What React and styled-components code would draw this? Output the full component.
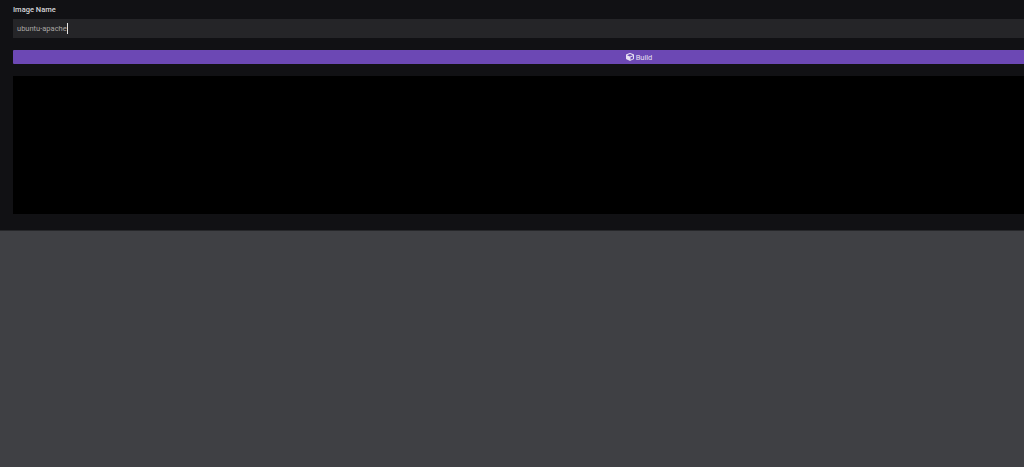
import { useState } from 'react'
import styled, { createGlobalStyle } from 'styled-components'
import { FaCube } from 'react-icons/fa'

const GlobalStyle = createGlobalStyle`
	html, body {
		margin: 0;
		padding: 0;
		height: 100%;
		overflow: hidden;
		background-color: #3f4044;
		font-family: 'Roboto', 'Liberation Sans', sans-serif;
	}
`

const Panel = styled.section`
	width: 1278px;
	height: 231px;
	box-sizing: border-box;
	padding: 5px 13px 0;
	background-color: #111114;
	border-bottom: 1px solid #26272a;
	display: flex;
	flex-direction: column;
`

const Label = styled.label`
	height: 14px;
	line-height: 10px;
	font-size: 7.5px;
	font-weight: 500;
	color: #d6d6d8;
`

const InputWrap = styled.div`
	position: relative;
	height: 19px;
`

const Input = styled.input`
	display: block;
	box-sizing: border-box;
	width: 100%;
	height: 100%;
	padding: 0 4px;
	background-color: #252528;
	border: none;
	outline: none;
	font-family: inherit;
	font-size: 7.5px;
	color: #a9a5a3;
`

const Caret = styled.span`
	position: absolute;
	left: 54px;
	top: 4px;
	width: 1px;
	height: 11px;
	background-color: #e8e8e8;
`

const BuildButton = styled.button`
	box-sizing: border-box;
	width: 100%;
	height: 14px;
	margin-top: 12px;
	padding: 0;
	display: flex;
	align-items: center;
	justify-content: center;
	gap: 2px;
	background-color: #6c48b4;
	border: none;
	border-radius: 1px;
	font-family: inherit;
	font-size: 7.5px;
	color: #e6e0f2;
	cursor: pointer;
`

const Output = styled.pre`
	height: 138px;
	margin: 12px 0 0;
	background-color: #000000;
`

export default function App() {
	const [imageName, setImageName] = useState('ubuntu-apache')

	return (
		<>
			<GlobalStyle />
			<Panel>
				<Label htmlFor='image-name'>Image Name</Label>
				<InputWrap>
					<Input
						id='image-name'
						value={imageName}
						onChange={(e) => setImageName(e.target.value)}
					/>
					<Caret />
				</InputWrap>
				<BuildButton type='button'>
					<FaCube size={8} />
					Build
				</BuildButton>
				<Output />
			</Panel>
		</>
	)
}
